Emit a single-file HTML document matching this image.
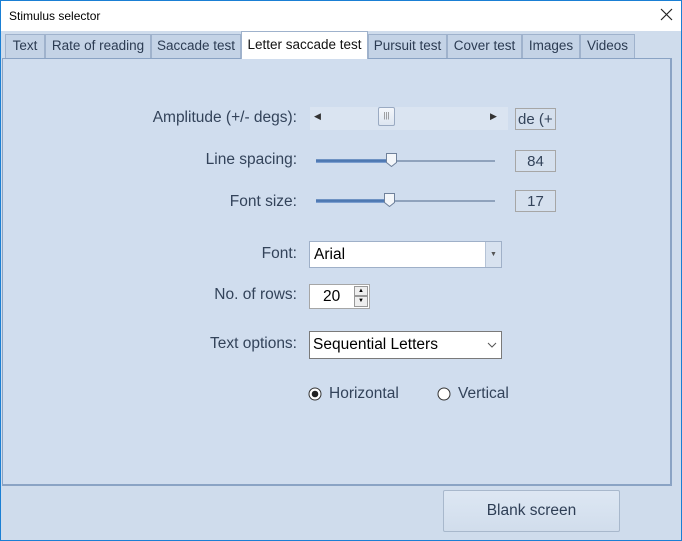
<!DOCTYPE html><html><head><style>
*{box-sizing:border-box;margin:0;padding:0}
body{width:682px;height:541px;position:relative;background:#cfdcec;font-family:"Liberation Sans",sans-serif;overflow:hidden}
.a{position:absolute}
#win{left:0;top:0;width:682px;height:541px;border:1px solid #1a7fd4}
#title{left:1px;top:1px;width:680px;height:30px;background:#fff;font-size:12px;color:#000}
.tab{position:absolute;top:34px;height:24px;background:#c4d3e6;border:1px solid #9fb2cc;border-bottom:none;font-size:13.5px;color:#2b3b52;text-align:center;line-height:22px}
.tab.sel{top:31px;height:28px;background:#fff;color:#111;z-index:2;line-height:26px}
#panel{left:2px;top:58px;width:670px;height:428px;border:1px solid #8aa3c4;border-right:2px solid #8aa3c4;border-bottom:2px solid #8aa3c4;background:#d0ddee}
.lbl{position:absolute;right:385px;font-size:15.5px;color:#33435a;white-space:nowrap}
.box{position:absolute;border:1px solid #a6a6a6;background:#d5e0ee;font-size:15px;color:#33435a;text-align:center}
.track{position:absolute;left:316px;width:179px;height:2px;background:#8fa2bc}
.fill{position:absolute;left:316px;height:4px;background:linear-gradient(#7f9fcc,#3d6aa8,#8fb0dc)}
.thumb{position:absolute;width:11px;height:14px}
</style></head><body>
<div class="a" id="win"></div>
<div class="a" id="title"><span class="a" style="left:8px;top:8px">Stimulus selector</span><svg class="a" style="left:659px;top:7px" width="13" height="13"><path d="M1 1l11 11M12 1L1 12" stroke="#222" stroke-width="1.2"/></svg></div>
<div class="tab" style="left:5px;width:40px">Text</div>
<div class="tab" style="left:45px;width:106px">Rate of reading</div>
<div class="tab" style="left:151px;width:90px">Saccade test</div>
<div class="tab sel" style="left:241px;width:127px">Letter saccade test</div>
<div class="tab" style="left:368px;width:79px">Pursuit test</div>
<div class="tab" style="left:447px;width:75px">Cover test</div>
<div class="tab" style="left:522px;width:58px">Images</div>
<div class="tab" style="left:580px;width:55px">Videos</div>
<div class="a" id="panel"></div>

<div class="lbl" style="top:109px">Amplitude (+/- degs):</div>
<div class="a" style="left:310px;top:107px;width:198px;height:23px;background:#dae4f1"></div>
<div class="a" style="left:314px;top:111px;font-size:9px;color:#333">◀</div>
<div class="a" style="left:490px;top:111px;font-size:9px;color:#333">▶</div>
<div class="a" style="left:378px;top:107px;width:17px;height:19px;background:linear-gradient(#f4f7fb,#dde6f1);border:1px solid #9aaac2;border-radius:2px;font-size:8px;color:#777;text-align:center;line-height:16px">|||</div>
<div class="box" style="left:515px;top:108px;width:41px;height:22px;text-align:left;padding-left:2px;line-height:21px;overflow:hidden">de (+</div>

<div class="lbl" style="top:151px">Line spacing:</div>
<div class="track" style="top:160px"></div><div class="fill" style="top:159px;width:75px"></div>
<svg class="thumb" style="left:386px;top:153px" viewBox="0 0 11 14"><path d="M.5 .5h10v9l-5 4-5-4z" fill="#f3f6fa" stroke="#6f819b"/></svg>
<div class="box" style="left:515px;top:150px;width:41px;height:22px;line-height:21px">84</div>

<div class="lbl" style="top:193px">Font size:</div>
<div class="track" style="top:200px"></div><div class="fill" style="top:199px;width:73px"></div>
<svg class="thumb" style="left:384px;top:193px" viewBox="0 0 11 14"><path d="M.5 .5h10v9l-5 4-5-4z" fill="#f3f6fa" stroke="#6f819b"/></svg>
<div class="box" style="left:515px;top:190px;width:41px;height:22px;line-height:21px">17</div>

<div class="lbl" style="top:245px">Font:</div>
<div class="a" style="left:309px;top:241px;width:193px;height:27px;background:#fff;border:1px solid #9fb0c8;font-size:15.5px;line-height:25px;padding-left:4px">Arial</div>
<div class="a" style="left:485px;top:242px;width:16px;height:25px;background:#d8e2ef;border-left:1px solid #b5c3d6;font-size:7px;color:#555;text-align:center;line-height:25px">▼</div>

<div class="lbl" style="top:286px">No. of rows:</div>
<div class="a" style="left:309px;top:284px;width:61px;height:25px;background:#fff;border:1px solid #a6a6a6;font-size:15.5px;line-height:23px;padding-left:13px">20</div>
<div class="a" style="left:354px;top:286px;width:14px;height:10px;border:1px solid #999;background:#eee;font-size:6px;text-align:center;line-height:8px">▲</div>
<div class="a" style="left:354px;top:296px;width:14px;height:11px;border:1px solid #999;background:#eee;font-size:6px;text-align:center;line-height:9px">▼</div>

<div class="lbl" style="top:335px">Text options:</div>
<div class="a" style="left:309px;top:331px;width:193px;height:28px;background:#fff;border:1px solid #7a7a7a;font-size:15.5px;line-height:26px;padding-left:3px">Sequential Letters</div>
<svg class="a" style="left:487px;top:342px" width="10" height="6" viewBox="0 0 10 6"><path d="M1 1l4 4 4-4" fill="none" stroke="#555"/></svg>

<svg class="a" style="left:308px;top:387px" width="14" height="14"><circle cx="7" cy="7" r="6" fill="#fff" stroke="#333"/><circle cx="7" cy="7" r="3.3" fill="#222"/></svg>
<div class="a" style="left:329px;top:385px;font-size:15.5px;color:#33435a">Horizontal</div>
<svg class="a" style="left:437px;top:387px" width="14" height="14"><circle cx="7" cy="7" r="6" fill="#fff" stroke="#333"/></svg>
<div class="a" style="left:458px;top:385px;font-size:15.5px;color:#33435a">Vertical</div>

<div class="a" style="left:443px;top:490px;width:177px;height:42px;border:1px solid #a8b8cc;border-radius:2px;background:linear-gradient(#dde7f3,#d1ddec);font-size:15.5px;color:#2e3e55;text-align:center;line-height:40px">Blank screen</div>
</body></html>
